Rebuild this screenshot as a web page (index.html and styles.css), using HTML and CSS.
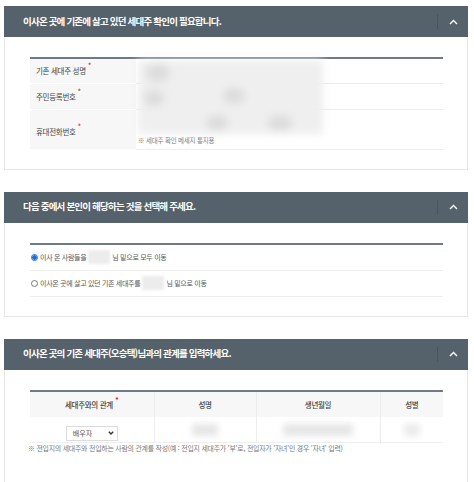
FILE: index.html
```html
<!DOCTYPE html>
<html lang="ko">
<head>
<meta charset="utf-8">
<title>세대주 확인</title>
<link rel="stylesheet" href="styles.css">
</head>
<body>
<div class="page">

  <section class="panel">
    <div class="panel-head">
      <h2>이사온 곳에 기존에 살고 있던 세대주 확인이 필요합니다.</h2>
      <span class="toggle"><svg width="9" height="6" viewBox="0 0 9 6"><polyline points="1,5 4.5,1.5 8,5" fill="none" stroke="#fff" stroke-width="1.4"/></svg></span>
    </div>
    <div class="panel-body">
      <div class="info-wrap">
        <table class="info">
          <tr class="r1"><th>기존 세대주 성명<span class="req">*</span></th><td></td></tr>
          <tr class="r2"><th>주민등록번호<span class="req">*</span></th><td></td></tr>
          <tr class="r3"><th>휴대전화번호<span class="req">*</span></th><td><div class="input-space"></div><p class="note">※ 세대주 확인 메세지 통지용</p></td></tr>
        </table>
        <div class="privacy">
          <span class="blob b1"></span><span class="blob b2"></span><span class="blob b3"></span><span class="blob b4"></span><span class="blob b5"></span>
        </div>
      </div>
    </div>
  </section>

  <section class="panel">
    <div class="panel-head">
      <h2>다음 중에서 본인이 해당하는 것을 선택해 주세요.</h2>
      <span class="toggle"><svg width="9" height="6" viewBox="0 0 9 6"><polyline points="1,5 4.5,1.5 8,5" fill="none" stroke="#fff" stroke-width="1.4"/></svg></span>
    </div>
    <div class="panel-body">
      <ul class="choices">
        <li><span class="radio checked"></span>이사 온 사람들을<span class="masked"></span>님 밑으로 모두 이동</li>
        <li><span class="radio"></span>이사온 곳에 살고 있던 기존 세대주를<span class="masked"></span>님 밑으로 이동</li>
      </ul>
    </div>
  </section>

  <section class="panel">
    <div class="panel-head">
      <h2>이사온 곳의 기존 세대주(오승택)님과의 관계를 입력하세요.</h2>
      <span class="toggle"><svg width="9" height="6" viewBox="0 0 9 6"><polyline points="1,5 4.5,1.5 8,5" fill="none" stroke="#fff" stroke-width="1.4"/></svg></span>
    </div>
    <div class="panel-body last">
      <table class="rel">
        <tr class="head">
          <th class="c1">세대주와의 관계<span class="req">*</span></th>
          <th class="c2">성명</th>
          <th class="c3">생년월일</th>
          <th class="c4">성별</th>
        </tr>
        <tr class="data">
          <td><div class="select">배우자<svg width="6" height="4" viewBox="0 0 6 4"><polyline points="0.8,0.8 3,3 5.2,0.8" fill="none" stroke="#333" stroke-width="1.4"/></svg></div></td>
          <td><span class="masked m-name"></span></td>
          <td><span class="masked m-birth"></span></td>
          <td><span class="masked m-sex"></span></td>
        </tr>
      </table>
      <p class="note rel-note">※ 전입지의 세대주와 전입하는 사람의 관계를 작성(예 : 전입지 세대주가 '부'로, 전입자가 '자녀'인 경우 '자녀' 입력)</p>
    </div>
  </section>

</div>
</body>
</html>
```

FILE: styles.css
```css
* { box-sizing: border-box; }
body {
  margin: 0;
  background: #fff;
  font-family: "Noto Sans CJK KR", "Noto Sans", sans-serif;
  color: #444;
}
.page {
  padding: 6px 6px 0 4px;
  display: flex;
  flex-direction: column;
  gap: 22px;
}
.panel-head {
  height: 31px;
  background: #56626b;
  display: flex;
  align-items: center;
  justify-content: space-between;
}
.panel-head h2 {
  margin: 0;
  padding-left: 19px;
  color: #fff;
  font-size: 9.5px;
  font-weight: 700;
  letter-spacing: -0.8px;
  line-height: 1;
}
.toggle {
  width: 31px;
  height: 15px;
  border-left: 1px solid rgba(0,0,0,0.14);
  display: flex;
  align-items: center;
  justify-content: center;
}
.panel-body {
  border: 1px solid #e6e6e6;
  border-top: none;
  padding: 20px 24px 19px 25px;
}
.panel-body.last { padding-bottom: 31px; }

/* info table */
.info-wrap { position: relative; }
.info {
  width: 100%;
  border-collapse: collapse;
  border-top: 2px solid #6f7a86;
}
.info th {
  width: 106px;
  background: #f7f7f7;
  text-align: left;
  font-weight: 400;
  font-size: 7.5px;
  letter-spacing: -0.3px;
  color: #444;
  padding: 0 0 0 6px;
  border-bottom: 1px solid #fff;
}
.info td { border-bottom: 1px solid #ececec; padding: 0 0 0 2px; }
.info .r1 { height: 25px; }
.info .r2 { height: 26px; }
.info .r3 { height: 40px; }
.info .r3 th { padding-top: 5px; }
.input-space { height: 23px; }
.note {
  margin: 0;
  font-size: 6.5px;
  color: #777;
  letter-spacing: -0.2px;
  line-height: 9px;
}
.req {
  color: #d4141e;
  font-size: 8px;
  line-height: 0;
  vertical-align: 5px;
  margin-left: 2px;
}
.privacy {
  position: absolute;
  left: 108px;
  top: 3px;
  width: 185px;
  height: 74px;
  background: #efefef;
  filter: blur(4px);
}
.blob {
  position: absolute;
  border-radius: 50%;
  background: #dcdcdc;
}
.b1 { left: 8px; top: 4px; width: 24px; height: 18px; }
.b2 { left: 6px; top: 30px; width: 20px; height: 16px; }
.b3 { left: 85px; top: 28px; width: 22px; height: 16px; }
.b4 { left: 68px; top: 55px; width: 22px; height: 16px; }
.b5 { left: 130px; top: 55px; width: 24px; height: 16px; }

/* choices */
.choices {
  list-style: none;
  margin: 0;
  padding: 0;
  border-top: 2px solid #6f7a86;
  font-size: 7px;
  color: #555;
  letter-spacing: -0.3px;
}
.choices li {
  height: 26px;
  display: flex;
  align-items: center;
  border-bottom: 1px solid #eeeeee;
  padding-left: 1px;
}
.radio {
  width: 7px;
  height: 7px;
  border-radius: 50%;
  border: 1px solid #777;
  margin-right: 2px;
  background: #fff;
}
.radio.checked {
  border-color: #1a6fe0;
  background: radial-gradient(circle, #1a6fe0 0 2px, #fff 2.5px);
}
.masked {
  display: inline-block;
  width: 22px;
  height: 14px;
  background: #ececec;
  filter: blur(1.5px);
  margin: 0 2px;
}

/* relation table */
.rel {
  width: 100%;
  border-collapse: collapse;
  border-top: 2px solid #6f7a86;
  table-layout: fixed;
}
.rel th, .rel td {
  text-align: center;
  border-left: 1px solid #ececec;
  padding: 0;
}
.rel th:first-child, .rel td:first-child { border-left: none; }
.rel .head { height: 26px; background: #f7f7f7; }
.rel th {
  font-size: 7.5px;
  font-weight: 500;
  color: #444;
  letter-spacing: -0.3px;
}
.rel .c1 { width: 124px; }
.rel .c2 { width: 102px; }
.rel .c3 { width: 124px; }
.rel .data { height: 26px; border-bottom: 1px solid #eeeeee; }
.select {
  display: inline-flex;
  align-items: center;
  justify-content: space-between;
  width: 52px;
  height: 15px;
  border: 1px solid #dcdcdc;
  padding: 0 3px 0 6px;
  font-size: 7px;
  color: #555;
  background: #fff;
}
.m-name { width: 26px; height: 12px; background: #e6e6e6; filter: blur(3px); }
.m-birth { width: 70px; height: 12px; background: #e6e6e6; filter: blur(3px); }
.m-sex { width: 16px; height: 12px; background: #ebebeb; filter: blur(3px); }
.rel-note { margin-top: 1px; margin-left: -2px; font-size: 6.9px; }
```
